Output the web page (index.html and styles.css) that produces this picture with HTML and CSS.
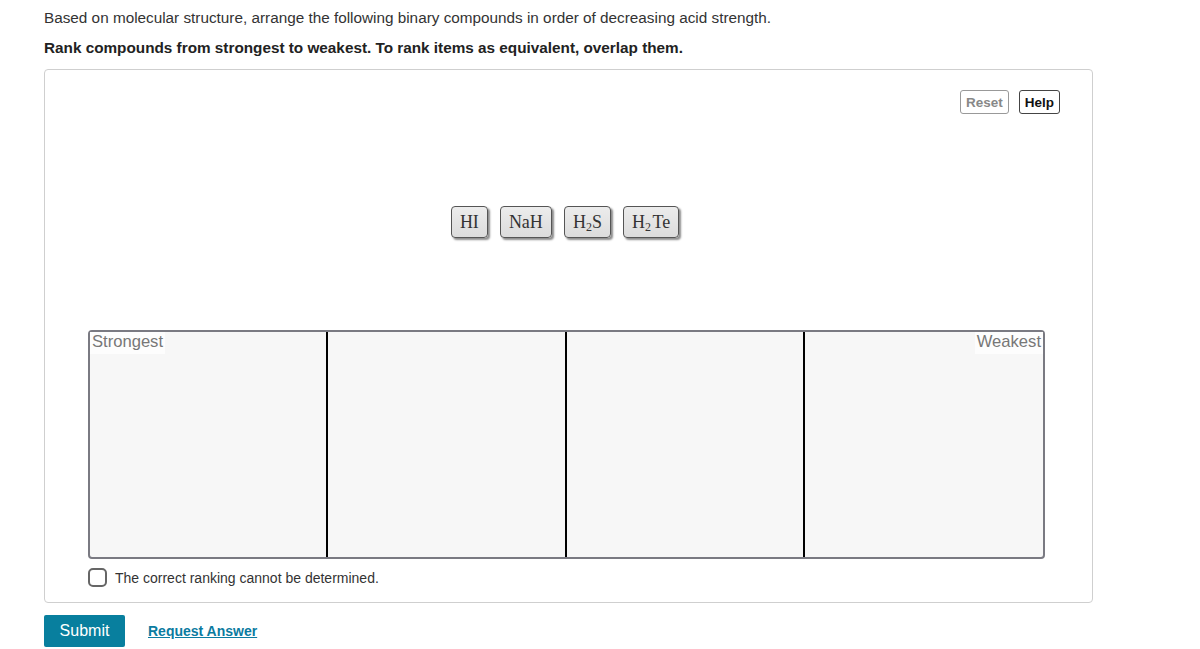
FILE: index.html
```html
<!DOCTYPE html>
<html>
<head>
<meta charset="utf-8">
<link rel="stylesheet" href="styles.css">
</head>
<body>
<div class="page">
  <p class="prompt">Based on molecular structure, arrange the following binary compounds in order of decreasing acid strength.</p>
  <p class="instr">Rank compounds from strongest to weakest. To rank items as equivalent, overlap them.</p>
  <div class="panel">
    <div class="toolbar">
      <button class="tbtn reset">Reset</button>
      <button class="tbtn help">Help</button>
    </div>
    <div class="chips">
      <span class="chip">HI</span>
      <span class="chip">NaH</span>
      <span class="chip">H<sub>2</sub>S</span>
      <span class="chip">H<sub>2</sub>&#8202;Te</span>
    </div>
    <div class="rank">
      <div class="cell"><span class="lbl">Strongest</span></div>
      <div class="cell"></div>
      <div class="cell"></div>
      <div class="cell right"><span class="lbl">Weakest</span></div>
    </div>
    <label class="check"><span class="box"></span>The correct ranking cannot be determined.</label>
  </div>
  <div class="actions">
    <button class="submit">Submit</button>
    <a class="req" href="#">Request Answer</a>
  </div>
</div>
</body>
</html>
```

FILE: styles.css
```css
* { box-sizing: border-box; }
html, body { margin: 0; padding: 0; background: #fff; }
body { font-family: "Liberation Sans", Arial, sans-serif; color: #222; }
.page { padding: 8px 0 0 44px; width: 1137px; }
.prompt { margin: 0; font-size: 15.3px; line-height: 19px; color: #333; }
.instr { margin: 11px 0 0; font-size: 15.3px; line-height: 19px; font-weight: bold; color: #222; }
.panel {
  margin-top: 12px;
  width: 1049px;
  height: 534px;
  border: 1px solid #cfcfcf;
  border-radius: 4px;
  padding: 20px 32px 0 43px;
  display: flex;
  flex-direction: column;
}
.toolbar { display: flex; justify-content: flex-end; gap: 10px; }
.tbtn {
  font-family: "Liberation Sans", Arial, sans-serif;
  font-size: 13.5px;
  font-weight: bold;
  height: 24px;
  padding: 0 5px;
  background: #fff;
  border: 1px solid #777;
  border-radius: 3px;
}
.reset { color: #888; border-color: #999; }
.help { color: #111; border-color: #444; }
.chips { display: flex; justify-content: center; gap: 12px; margin-top: 92px; padding-right: 18px; }
.chip {
  font-family: "Liberation Serif", "Times New Roman", serif;
  font-size: 18px;
  color: #333;
  height: 32px;
  line-height: 30px;
  padding: 0 8px;
  border: 1px solid #555;
  border-radius: 4px;
  background: linear-gradient(#ececec, #dcdcdc);
  box-shadow: 2px 2px 2px rgba(0,0,0,0.45);
}
.chip sub { font-size: 12px; vertical-align: -3px; line-height: 0; }
.rank {
  margin-top: 92px;
  width: 957px;
  height: 229px;
  border: 2px solid #7a7a82;
  border-radius: 4px;
  background: #f7f7f7;
  display: grid;
  grid-template-columns: 1fr 1fr 1fr 1fr;
}
.cell { border-right: 2px solid #000; display: flex; align-items: flex-start; }
.cell.right { border-right: none; justify-content: flex-end; }
.lbl {
  font-size: 16.6px;
  color: #777;
  background: #fdfdfd;
  padding: 0 2px 3px 2px;
  line-height: 19px;
}
.check { display: flex; align-items: center; gap: 8px; margin-top: 9px; font-size: 14px; color: #333; }
.box { width: 19px; height: 19px; border: 2px solid #666; border-radius: 5px; background: #fff; }
.actions { display: flex; align-items: center; gap: 23px; margin-top: 12px; }
.submit {
  font-family: "Liberation Sans", Arial, sans-serif;
  width: 81px; height: 32px;
  background: #087f9e;
  color: #fff;
  font-size: 16px;
  border: none;
  border-radius: 2px;
}
.req { color: #0b7ba0; font-weight: bold; font-size: 14px; text-decoration: underline; }
```
